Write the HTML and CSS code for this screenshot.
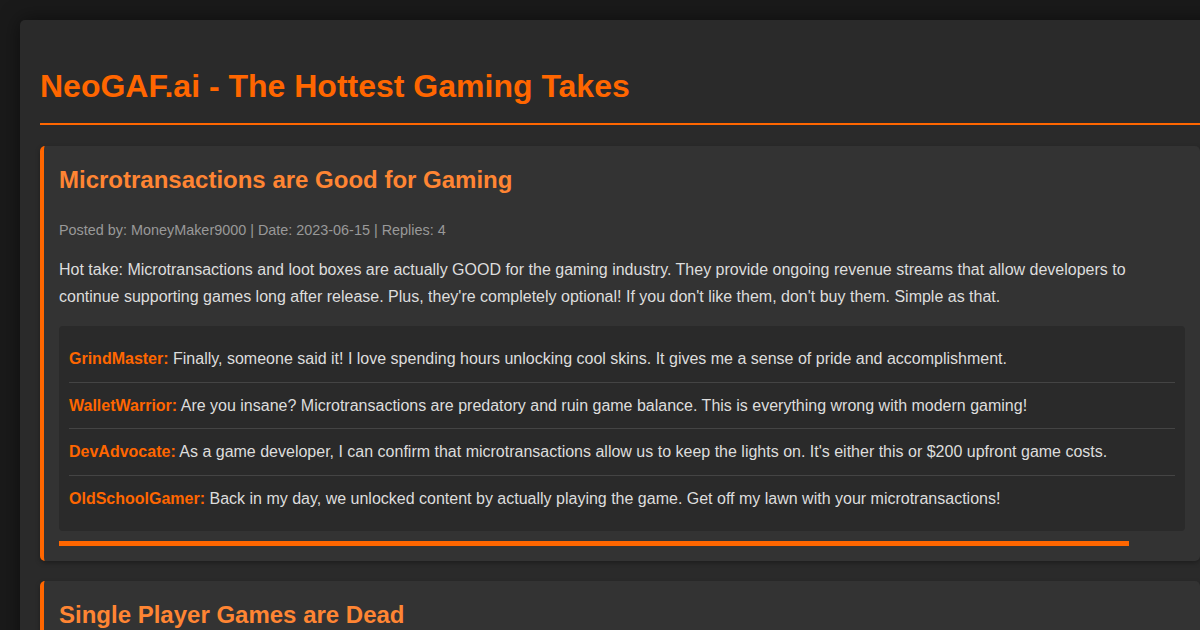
FILE: index.html
```html
<!DOCTYPE html>
<html lang="en">
<head>
<meta charset="utf-8">
<title>NeoGAF.ai - The Hottest Gaming Takes</title>
<link rel="stylesheet" href="styles.css">
</head>
<body>
<div class="container">
  <header class="site-header">
    <h1>NeoGAF.ai - The Hottest Gaming Takes</h1>
  </header>
  <article class="post">
    <h2 class="post-title">Microtransactions are Good for Gaming</h2>
    <div class="meta">Posted by: MoneyMaker9000 | Date: 2023-06-15 | Replies: 4</div>
    <p class="post-body">Hot take: Microtransactions and loot boxes are actually GOOD for the gaming industry. They provide ongoing revenue streams that allow developers to continue supporting games long after release. Plus, they're completely optional! If you don't like them, don't buy them. Simple as that.</p>
    <div class="replies">
      <div class="reply"><span class="user">GrindMaster:</span> Finally, someone said it! I love spending hours unlocking cool skins. It gives me a sense of pride and accomplishment.</div>
      <div class="reply"><span class="user">WalletWarrior:</span> Are you insane? Microtransactions are predatory and ruin game balance. This is everything wrong with modern gaming!</div>
      <div class="reply"><span class="user">DevAdvocate:</span> As a game developer, I can confirm that microtransactions allow us to keep the lights on. It's either this or $200 upfront game costs.</div>
      <div class="reply"><span class="user">OldSchoolGamer:</span> Back in my day, we unlocked content by actually playing the game. Get off my lawn with your microtransactions!</div>
    </div>
    <div class="heat"><div class="heat-fill" style="width: 95%"></div></div>
  </article>
  <article class="post">
    <h2 class="post-title">Single Player Games are Dead</h2>
  </article>
</div>
</body>
</html>
```
FILE: styles.css
```css
html, body {
  margin: 0;
  padding: 0;
}
body {
  background: #1a1a1a;
  font-family: "Liberation Sans", Arial, sans-serif;
  color: #dddddd;
  padding: 20px;
  overflow: hidden;
}
.container {
  box-sizing: border-box;
  width: 1200px;
  background: #2a2a2a;
  border-radius: 5px;
  padding: 20px;
  box-shadow: 0 0 20px rgba(0, 0, 0, 0.5);
}
.site-header {
  padding: 28px 0 19px;
  border-bottom: 2px solid #ff6600;
  margin-bottom: 21px;
}
.site-header h1 {
  margin: 0;
  font-size: 32px;
  line-height: 36px;
  color: #ff6600;
  font-weight: bold;
}
.post {
  background: #333333;
  border-left: 4px solid #ff6600;
  border-radius: 5px;
  padding: 20px 15px 15px;
  margin-bottom: 20px;
  box-shadow: 0 2px 5px rgba(0, 0, 0, 0.3);
}
.post-title {
  margin: 0;
  font-size: 24px;
  line-height: 28px;
  color: #ff8533;
}
.meta {
  margin-top: 25px;
  font-size: 14.4px;
  line-height: 22px;
  color: #999999;
}
.post-body {
  margin: 15px 0 16px;
  font-size: 16px;
  line-height: 27px;
  color: #dddddd;
}
.replies {
  background: #2a2a2a;
  border-radius: 4px;
  padding: 10px;
}
.reply {
  padding: 10px 0;
  font-size: 16px;
  line-height: 25.6px;
  border-bottom: 1px solid #444444;
}
.reply:last-child {
  border-bottom: none;
}
.user {
  color: #ff6600;
  font-weight: bold;
}
.heat {
  margin-top: 10px;
  height: 5px;
}
.heat-fill {
  height: 100%;
  background: #ff6600;
}
```
